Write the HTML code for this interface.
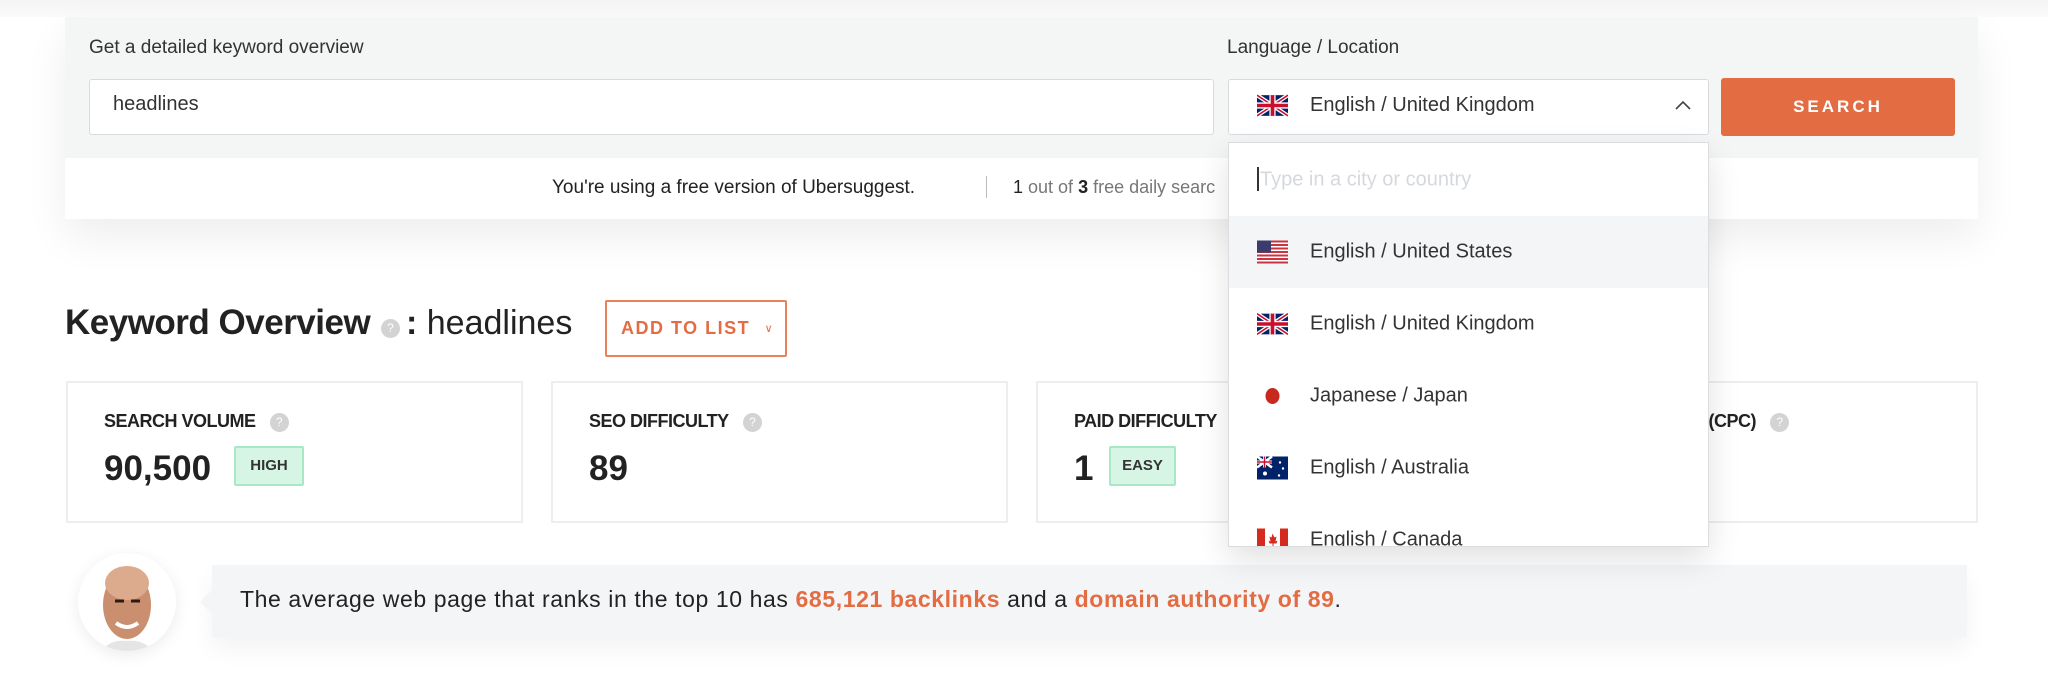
<!DOCTYPE html>
<html><head><meta charset="utf-8"><style>
*{margin:0;padding:0;box-sizing:border-box}
body{width:2048px;height:678px;background:#fff;font-family:"Liberation Sans",sans-serif;color:#222;position:relative;overflow:hidden}
.abs{position:absolute}
.topbg{left:0;top:0;width:2048px;height:17px;background:linear-gradient(#f4f4f4,#fbfbfb)}
.panel{left:65px;top:17px;width:1913px;height:202px;background:#fff;box-shadow:0 18px 40px rgba(0,0,0,0.07)}
.gray{left:65px;top:17px;width:1913px;height:141px;background:#f4f5f5}
.lbl{font-size:19px;color:#333}
.box{background:#fff;border:1px solid #d8dadd;border-radius:3px}
.btn{background:#e36c43;border-radius:3px;color:#fff;font-weight:bold;font-size:17px;letter-spacing:3px;text-align:center;line-height:58px}
.ddt{font-size:20px;color:#333}
.menu{left:1228px;top:142px;width:481px;height:405px;background:#fff;border:1px solid #dcdde0;box-shadow:0 12px 30px rgba(0,0,0,0.12);overflow:hidden}
.row{position:absolute;left:0;width:481px;height:72px}
.row .t{position:absolute;left:81px;top:50%;transform:translateY(-50%);font-size:20px;color:#333}
.row svg{position:absolute;left:28px;top:50%;transform:translateY(-50%)}
.card{top:381px;width:457px;height:142px;border:2px solid #eceef0;background:#fff}
.cl{position:absolute;left:36px;top:28px;font-size:18px;font-weight:bold;letter-spacing:-0.5px;color:#222}
.q{display:inline-block;width:19px;height:19px;border-radius:50%;background:#d3d3d3;color:#fff;font-size:12px;text-align:center;line-height:19px;vertical-align:middle;margin-left:14px;font-weight:normal}
.cv{position:absolute;left:36px;top:66px;font-size:35px;font-weight:bold;color:#222}
.badge{position:absolute;top:63px;height:40px;background:#d6f5e4;border:2px solid #a8e8c4;border-radius:2px;font-size:15px;font-weight:bold;color:#333;text-align:center;line-height:36px}
</style></head><body>
<div class="abs topbg"></div>
<div class="abs panel"></div>
<div class="abs gray"></div>
<div class="abs lbl" style="left:89px;top:37px">Get a detailed keyword overview</div>
<div class="abs lbl" style="left:1227px;top:37px">Language / Location</div>
<div class="abs box" style="left:89px;top:79px;width:1125px;height:56px"></div>
<div class="abs" style="left:113px;top:93px;font-size:20px;color:#333">headlines</div>
<div class="abs box" style="left:1228px;top:79px;width:481px;height:56px"></div>
<svg class="abs" style="left:1257px;top:94px" width="31" height="23" viewBox="0 0 60 40"><rect width="60" height="40" fill="#012169"/><path d="M0 0L60 40M60 0L0 40" stroke="#fff" stroke-width="8"/><path d="M0 0L60 40M60 0L0 40" stroke="#c8102e" stroke-width="3"/><path d="M30 0V40M0 20H60" stroke="#fff" stroke-width="12"/><path d="M30 0V40M0 20H60" stroke="#c8102e" stroke-width="7"/></svg>
<div class="abs ddt" style="left:1310px;top:94px">English / United Kingdom</div>
<svg class="abs" style="left:1675px;top:100px" width="16" height="10" viewBox="0 0 16 10"><path d="M1 9L8 2L15 9" stroke="#444" stroke-width="1.6" fill="none"/></svg>
<div class="abs btn" style="left:1721px;top:78px;width:234px;height:58px">SEARCH</div>
<div class="abs" style="left:552px;top:177px;font-size:19px;color:#222">You're using a free version of Ubersuggest.</div>
<div class="abs" style="left:986px;top:176px;width:1px;height:22px;background:#bbb"></div>
<div class="abs" style="left:1013px;top:177px;font-size:18px;color:#777;white-space:nowrap"><b style="color:#222;font-weight:normal">1</b> out of <b style="color:#222">3</b> free daily searc</div>

<div class="abs" style="left:65px;top:303px;font-size:35px;font-weight:bold;color:#222;letter-spacing:-0.5px">Keyword Overview</div>
<div class="abs" style="left:381px;top:319px;width:19px;height:19px;border-radius:50%;background:#d3d3d3;color:#fff;font-size:12px;text-align:center;line-height:19px">?</div>
<div class="abs" style="left:406px;top:304px;font-size:34px;color:#222"><b>:</b> headlines</div>
<div class="abs" style="left:605px;top:300px;width:182px;height:57px;border:2px solid #e8815c;border-radius:2px;color:#e36c43;font-weight:bold;font-size:18px;letter-spacing:1.5px;line-height:53px;padding-left:14px">ADD TO LIST <span style="font-weight:normal;font-size:11px;letter-spacing:0;margin-left:8px;position:relative;top:-2px">&#8744;</span></div>

<div class="abs card" style="left:66px"><div class="cl">SEARCH VOLUME<span class="q">?</span></div><div class="cv">90,500</div><div class="badge" style="left:166px;width:70px">HIGH</div></div>
<div class="abs card" style="left:551px"><div class="cl">SEO DIFFICULTY<span class="q">?</span></div><div class="cv">89</div></div>
<div class="abs card" style="left:1036px"><div class="cl">PAID DIFFICULTY<span class="q">?</span></div><div class="cv">1</div><div class="badge" style="left:71px;width:67px">EASY</div></div>
<div class="abs card" style="left:1521px"><div class="cl">COST PER CLICK (CPC)<span class="q">?</span></div><div class="cv">$0.39</div></div>

<div class="abs" style="left:212px;top:565px;width:1755px;height:72px;background:#f4f5f7;box-shadow:0 12px 24px rgba(0,0,0,0.05)"></div>
<div class="abs" style="left:200px;top:590px;width:0;height:0;border-top:12px solid transparent;border-bottom:12px solid transparent;border-right:12px solid #f4f5f7"></div>
<div class="abs" style="left:240px;top:586px;font-size:23px;color:#222;letter-spacing:0.6px;white-space:nowrap">The average web page that ranks in the top 10 has <b style="color:#e36c43">685,121 backlinks</b> and a <b style="color:#e36c43">domain authority of 89</b>.</div>
<div class="abs" style="left:78px;top:553px;width:98px;height:98px;border-radius:50%;background:#fff;box-shadow:0 4px 16px rgba(0,0,0,0.08);overflow:hidden">
<svg width="98" height="98" viewBox="0 0 98 98"><ellipse cx="49" cy="52" rx="24" ry="34" fill="#c98f6e"/><ellipse cx="49" cy="30" rx="22" ry="17" fill="#dcaa8c"/><path d="M38 70Q49 78 60 70" stroke="#fff" stroke-width="4" fill="none"/><path d="M37 48h9M53 48h9" stroke="#2a1a12" stroke-width="3"/><path d="M24 98Q32 86 49 88Q66 86 74 98Z" fill="#e5e5e5"/></svg></div>

<div class="abs menu">
<div class="row" style="top:0;height:73px"><div style="position:absolute;left:28px;top:24px;width:1.5px;height:24px;background:#333"></div><div class="t" style="left:31px;color:#d5d8dd">Type in a city or country</div></div>
<div class="row" style="top:73px;background:#f4f5f7"><svg width="31" height="23" viewBox="0 0 31 23"><rect width="31" height="23" fill="#fff"/><g fill="#c8343f"><rect y="0" width="31" height="2"/><rect y="3.5" width="31" height="2"/><rect y="7" width="31" height="2"/><rect y="10.5" width="31" height="2"/><rect y="14" width="31" height="2"/><rect y="17.5" width="31" height="2"/><rect y="21" width="31" height="2"/></g><rect width="14" height="12" fill="#3c3b6e"/></svg><div class="t">English / United States</div></div>
<div class="row" style="top:145px"><svg width="31" height="23" viewBox="0 0 60 40"><rect width="60" height="40" fill="#012169"/><path d="M0 0L60 40M60 0L0 40" stroke="#fff" stroke-width="8"/><path d="M0 0L60 40M60 0L0 40" stroke="#c8102e" stroke-width="3"/><path d="M30 0V40M0 20H60" stroke="#fff" stroke-width="12"/><path d="M30 0V40M0 20H60" stroke="#c8102e" stroke-width="7"/></svg><div class="t">English / United Kingdom</div></div>
<div class="row" style="top:217px"><svg width="31" height="23" viewBox="0 0 31 23"><ellipse cx="15.5" cy="11.5" rx="7" ry="8" fill="#c8281e"/></svg><div class="t">Japanese / Japan</div></div>
<div class="row" style="top:289px"><svg width="31" height="23" viewBox="0 0 31 23"><rect width="31" height="23" fill="#012169"/><path d="M0 0L15 11M15 0L0 11" stroke="#fff" stroke-width="2.5"/><path d="M7.5 0V11M0 5.5H15" stroke="#fff" stroke-width="3"/><path d="M7.5 0V11M0 5.5H15" stroke="#c8102e" stroke-width="1.5"/><circle cx="8" cy="17" r="2" fill="#fff"/><circle cx="23" cy="6" r="1.2" fill="#fff"/><circle cx="26" cy="12" r="1.2" fill="#fff"/><circle cx="22" cy="19" r="1.2" fill="#fff"/></svg><div class="t">English / Australia</div></div>
<div class="row" style="top:361px"><svg width="31" height="23" viewBox="0 0 31 23"><rect width="31" height="23" fill="#fff"/><rect width="8" height="23" fill="#d52b1e"/><rect x="23" width="8" height="23" fill="#d52b1e"/><path d="M15.5 5l2 4 2-1-1 5 2-1-1 3h-3v3h-1v-3h-3l-1-3 2 1-1-5 2 1z" fill="#d52b1e"/></svg><div class="t">English / Canada</div></div>
</div>
</body></html>
